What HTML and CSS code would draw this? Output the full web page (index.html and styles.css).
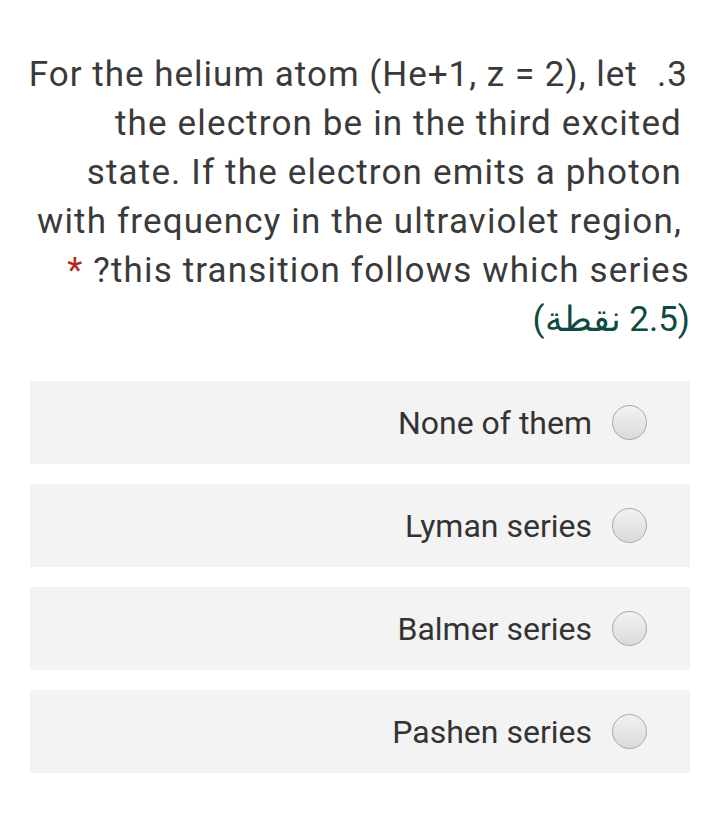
FILE: index.html
```html
<!DOCTYPE html>
<html lang="en">
<head>
    <meta charset="UTF-8" />
    <meta name="viewport" content="width=device-width, initial-scale=1.0"/>
    <title>Question 3</title>
    <link rel="stylesheet" href="styles.css">
</head>
<body>

    <main class="question">
        <div class="question-title">
            <span class="line first">For the helium atom (He+1, z = 2), let&nbsp; .3</span>
            <span class="line inset">the electron be in the third excited</span>
            <span class="line inset">state. If the electron emits a photon</span>
            <span class="line inset">with frequency in the ultraviolet region,</span>
            <span class="line"><span class="required">*</span> ?this transition follows which series</span>
            <span class="line points" dir="rtl">(2.5 نقطة)</span>
        </div>

        <div class="options">
            <label class="option">
                <span class="option-text">None of them</span>
                <span class="radio"></span>
            </label>
            <label class="option">
                <span class="option-text">Lyman series</span>
                <span class="radio"></span>
            </label>
            <label class="option">
                <span class="option-text">Balmer series</span>
                <span class="radio"></span>
            </label>
            <label class="option">
                <span class="option-text">Pashen series</span>
                <span class="radio"></span>
            </label>
        </div>
    </main>

</body>
</html>
```

FILE: styles.css
```css
body {
    font-family: Roboto, "Noto Sans", sans-serif;
    margin: 0;
    padding: 0;
    background-color: #ffffff;
    color: #3a3a3a;
}
.question {
    padding: 50px 30px 0 30px;
}
.question-title {
    text-align: right;
    font-size: 35px;
    line-height: 49px;
    letter-spacing: 1.15px;
}
.line {
    display: block;
    white-space: nowrap;
}
.first {
    letter-spacing: 1px;
    margin-left: -4px;
    padding-right: 2px;
}
.inset {
    padding-right: 8px;
}
.required {
    color: #b3261e;
}
.points {
    color: #0d4a40;
    letter-spacing: 0.5px;
}
.options {
    margin-top: 37px;
    display: flex;
    flex-direction: column;
    gap: 20px;
}
.option {
    display: flex;
    justify-content: flex-end;
    align-items: center;
    gap: 20px;
    height: 83px;
    padding-right: 43px;
    background-color: #f3f3f3;
    font-size: 32px;
    color: #333;
}
.radio {
    width: 35px;
    height: 35px;
    border-radius: 50%;
    border: 1px solid #a9a9a9;
    background: linear-gradient(#f2f2f2, #dadada);
    box-sizing: border-box;
}
```
